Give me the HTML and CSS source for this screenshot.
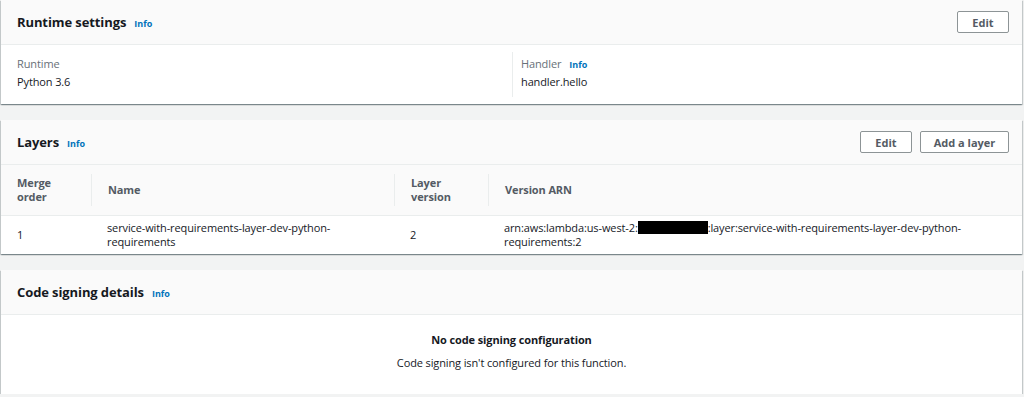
FILE: index.html
```html
<!DOCTYPE html>
<html lang="en">
<head>
<meta charset="utf-8">
<title>Lambda function configuration</title>
<link rel="stylesheet" href="styles.css">
</head>
<body>
<main class="page">
  <section class="card">
    <header class="card-header">
      <h2 class="card-title">Runtime settings <a class="info" href="#">Info</a></h2>
      <div class="actions"><button class="btn">Edit</button></div>
    </header>
    <div class="card-body fields">
      <div class="field">
        <div class="label">Runtime</div>
        <div class="value">Python 3.6</div>
      </div>
      <div class="field field-divided">
        <div class="label">Handler <a class="info" href="#">Info</a></div>
        <div class="value">handler.hello</div>
      </div>
    </div>
  </section>

  <section class="card">
    <header class="card-header">
      <h2 class="card-title">Layers <a class="info" href="#">Info</a></h2>
      <div class="actions">
        <button class="btn">Edit</button>
        <button class="btn btn-wide">Add a layer</button>
      </div>
    </header>
    <div class="table">
      <div class="row head">
        <div class="cell"><span>Merge<br>order</span></div>
        <div class="cell divided"><span>Name</span></div>
        <div class="cell divided"><span>Layer<br>version</span></div>
        <div class="cell divided"><span>Version ARN</span></div>
      </div>
      <div class="row data">
        <div class="cell">1</div>
        <div class="cell">service-with-requirements-layer-dev-python-<br>requirements</div>
        <div class="cell">2</div>
        <div class="cell">arn:aws:lambda:us-west-2:<span class="redact"></span>:layer:service-with-requirements-layer-dev-python-<br>requirements:2</div>
      </div>
    </div>
  </section>

  <section class="card">
    <header class="card-header">
      <h2 class="card-title">Code signing details <a class="info" href="#">Info</a></h2>
    </header>
    <div class="card-body empty">
      <div class="empty-title">No code signing configuration</div>
      <div class="empty-text">Code signing isn't configured for this function.</div>
    </div>
  </section>
</main>
</body>
</html>
```

FILE: styles.css
```css
* { box-sizing: border-box; }

html, body {
  margin: 0;
  padding: 0;
  background: #f2f3f3;
}

body {
  font-family: "Open Sans", "Noto Sans", Arial, sans-serif;
  font-size: 11px;
  letter-spacing: -0.12px;
  color: #16191f;
}

.page {
  display: flex;
  flex-direction: column;
  gap: 16px;
  padding: 0 2px 0 1px;
}

.card {
  background: #fff;
  box-shadow: 0 1px 1px 0 rgba(0, 28, 36, 0.3), 1px 1px 1px 0 rgba(0, 28, 36, 0.15), -1px 1px 1px 0 rgba(0, 28, 36, 0.15);
}

.card-header {
  height: 45px;
  display: flex;
  align-items: center;
  justify-content: space-between;
  padding: 0 13px 0 16px;
  background: #fafafa;
  border-bottom: 1px solid #eaeded;
}

.card-title {
  margin: 0;
  font-size: 13px;
  font-weight: 700;
  letter-spacing: -0.1px;
  color: #16191f;
  display: flex;
  align-items: baseline;
  gap: 8px;
}

.info {
  font-size: 9px;
  font-weight: 700;
  letter-spacing: 0;
  color: #0073bb;
  text-decoration: none;
}

.actions {
  display: flex;
  gap: 8px;
}

.btn {
  height: 22px;
  width: 52px;
  padding: 0;
  font-family: inherit;
  font-size: 11px;
  font-weight: 700;
  color: #545b64;
  background: #fff;
  border: 1px solid #8d9496;
  border-radius: 2px;
}

.btn-wide { width: 89px; }

.fields {
  display: grid;
  grid-template-columns: 495px 1fr;
  padding: 7px 0 7px 16px;
  height: 59px;
}

.field {
  display: flex;
  flex-direction: column;
  gap: 3px;
  padding-top: 4px;
}

.field-divided {
  border-left: 1px solid #eaeded;
  padding-left: 8px;
}

.label {
  color: #687078;
  display: flex;
  align-items: baseline;
  gap: 8px;
}

.value { color: #16191f; }

.table { display: flex; flex-direction: column; }

.row {
  display: grid;
  grid-template-columns: 90px 303px 94px 1fr;
}

.row.head {
  height: 50px;
  background: #fafafa;
  font-weight: 700;
  color: #545b64;
  line-height: 14px;
  align-items: center;
}

.row.head .cell {
  padding-left: 16px;
  height: 32px;
  display: flex;
  align-items: center;
}

.row.head .cell.divided { border-left: 1px solid #eaeded; }

.row.data {
  height: 39px;
  align-items: center;
  line-height: 14px;
  border-top: 1px solid #eaeded;
}

.row.data .cell { padding-left: 16px; }

.redact {
  display: inline-block;
  width: 70px;
  height: 13px;
  background: #000;
  vertical-align: -2px;
}

.empty {
  height: 79px;
  display: flex;
  flex-direction: column;
  align-items: center;
  padding-top: 17px;
  gap: 8px;
}

.empty-title { font-weight: 700; }

.empty-text { color: #16191f; }
```
